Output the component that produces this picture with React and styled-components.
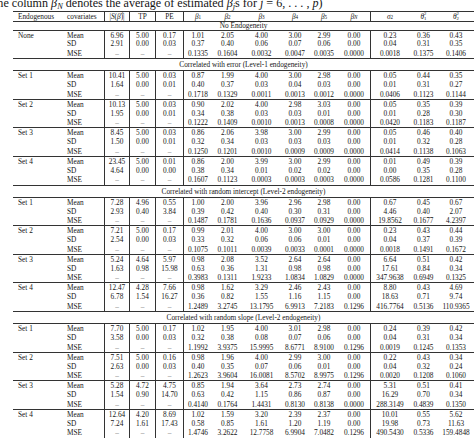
import React from 'react';
import styled, { createGlobalStyle } from 'styled-components';

const GlobalStyle = createGlobalStyle`
  html, body {
    margin: 0;
    padding: 0;
    background: #fff;
  }
  body {
    font-family: "Liberation Serif", "Times New Roman", serif;
    color: #161616;
    overflow: hidden;
  }
`;

// column widths, measured off the scan
const COLS = '49px 42px 25px 26px 28px 29px 31px 37px 30px 28px 32px 39px 29px 36px';
const BARS = [2, 3, 4, 5, 11];
const LINE = '1px solid #333';

const Page = styled.div`
  width: 474px;
  height: 440px;
  overflow: hidden;
  padding-top: 1px;
  box-sizing: border-box;
`;

const Caption = styled.div`
  margin: -4.5px 0 0 -6px;
  height: 12.5px;
  line-height: 12px;
  font-size: 12.1px;
  white-space: nowrap;
`;

const Table = styled.div`
  margin: 2px 0 0 13px;
  width: 461px;
  border-top: ${LINE};
  font-size: 7.3px;
`;

const Row = styled.div`
  display: grid;
  grid-template-columns: ${COLS};
  box-sizing: border-box;
  height: ${p => p.$h}px;
  border-top: ${p => (p.$rule ? LINE : 'none')};
`;

const Cell = styled.div`
  display: flex;
  align-items: center;
  justify-content: ${p => (p.$left ? 'flex-start' : 'center')};
  padding-left: ${p => (p.$left ? '5px' : '0')};
  border-left: ${p => (p.$bar ? LINE : 'none')};
  white-space: nowrap;
`;

const SectionRow = styled.div`
  box-sizing: border-box;
  display: flex;
  align-items: center;
  justify-content: center;
  height: ${p => p.$h}px;
  border-top: ${LINE};
  white-space: nowrap;
`;

const Sym = styled.i`
  font-style: italic;
`;

const Sub = styled.sub`
  font-size: 0.7em;
  vertical-align: -0.25em;
  line-height: 0;
`;

const Sup = styled.sup`
  font-size: 0.7em;
  vertical-align: 0.45em;
  line-height: 0;
`;

const Scripts = styled.span`
  display: inline-flex;
  flex-direction: column;
  font-size: 0.65em;
  line-height: 0.9;
  vertical-align: -0.25em;
`;

const Dash = styled.span`
  color: #777;
`;

const HEAD = [
  'Endogenous',
  'covariates',
  <>|<Sym>S</Sym>(<Sym>β̂</Sym>)|</>,
  'TP',
  'PE',
  <><Sym>β</Sym><Sub>1</Sub></>,
  <><Sym>β</Sym><Sub>2</Sub></>,
  <><Sym>β</Sym><Sub>3</Sub></>,
  <><Sym>β</Sym><Sub>4</Sub></>,
  <><Sym>β</Sym><Sub>5</Sub></>,
  <><Sym>β</Sym><Sub><Sym>N</Sym></Sub></>,
  <><Sym>σ</Sym><Sup>2</Sup></>,
  <><Sym>θ</Sym><Scripts><span>2</span><span>1</span></Scripts></>,
  <><Sym>θ</Sym><Scripts><span>2</span><span>2</span></Scripts></>,
];

const SECTIONS = [
  {
    title: 'No Endogeneity',
    h: 8.5,
    sets: [
      ['None',
        ['6.96', '5.00', '0.17', '1.01', '2.05', '4.00', '3.00', '2.99', '0.00', '0.23', '0.36', '0.43'],
        ['2.91', '0.00', '0.03', '0.37', '0.40', '0.06', '0.07', '0.06', '0.00', '0.04', '0.31', '0.35'],
        ['0.1335', '0.1604', '0.0032', '0.0047', '0.0035', '0.0000', '0.0018', '0.1375', '0.1406']],
    ],
  },
  {
    title: 'Correlated with error (Level-1 endogeneity)',
    h: 12.3,
    sets: [
      ['Set 1',
        ['10.41', '5.00', '0.03', '0.87', '1.99', '4.00', '3.00', '2.98', '0.00', '0.05', '0.44', '0.35'],
        ['1.64', '0.00', '0.01', '0.40', '0.37', '0.03', '0.04', '0.03', '0.00', '0.01', '0.31', '0.27'],
        ['0.1718', '0.1329', '0.0011', '0.0013', '0.0012', '0.0000', '0.0406', '0.1123', '0.1144']],
      ['Set 2',
        ['10.13', '5.00', '0.03', '0.90', '2.02', '4.00', '2.98', '3.03', '0.00', '0.05', '0.35', '0.39'],
        ['1.95', '0.00', '0.01', '0.34', '0.38', '0.03', '0.03', '0.01', '0.00', '0.01', '0.28', '0.30'],
        ['0.1222', '0.1409', '0.0010', '0.0013', '0.0008', '0.0000', '0.0420', '0.1183', '0.1187']],
      ['Set 3',
        ['8.45', '5.00', '0.03', '0.86', '2.06', '3.98', '3.00', '2.99', '0.00', '0.05', '0.46', '0.40'],
        ['1.50', '0.00', '0.01', '0.32', '0.34', '0.03', '0.03', '0.03', '0.00', '0.01', '0.32', '0.28'],
        ['0.1250', '0.1201', '0.0010', '0.0009', '0.0009', '0.0000', '0.0414', '0.1138', '0.1063']],
      ['Set 4',
        ['23.45', '5.00', '0.01', '0.86', '2.00', '3.99', '3.00', '2.99', '0.00', '0.01', '0.49', '0.39'],
        ['4.64', '0.00', '0.00', '0.38', '0.34', '0.01', '0.02', '0.02', '0.00', '0.00', '0.35', '0.28'],
        ['0.1607', '0.1123', '0.0003', '0.0003', '0.0003', '0.0000', '0.0586', '0.1281', '0.1100']],
    ],
  },
  {
    title: 'Correlated with random intercept (Level-2 endogeneity)',
    h: 12.3,
    sets: [
      ['Set 1',
        ['7.28', '4.96', '0.55', '1.00', '2.00', '3.96', '2.96', '2.98', '0.00', '0.67', '0.45', '0.67'],
        ['2.93', '0.40', '3.84', '0.39', '0.42', '0.40', '0.30', '0.31', '0.00', '4.46', '0.40', '2.07'],
        ['0.1487', '0.1781', '0.1636', '0.0937', '0.0929', '0.0000', '19.8562', '0.1677', '4.2397']],
      ['Set 2',
        ['7.21', '5.00', '0.17', '0.99', '2.01', '4.00', '3.00', '3.00', '0.00', '0.23', '0.43', '0.44'],
        ['2.54', '0.00', '0.03', '0.33', '0.32', '0.06', '0.06', '0.01', '0.00', '0.04', '0.37', '0.39'],
        ['0.1075', '0.1011', '0.0039', '0.0033', '0.0001', '0.0000', '0.0018', '0.1491', '0.1672']],
      ['Set 3',
        ['5.24', '4.64', '5.97', '0.98', '2.08', '3.52', '2.64', '2.64', '0.00', '6.64', '0.51', '0.42'],
        ['1.63', '0.98', '15.98', '0.63', '0.36', '1.31', '0.98', '0.98', '0.00', '17.61', '0.84', '0.34'],
        ['0.3983', '0.1311', '1.9233', '1.0834', '1.0829', '0.0000', '347.9638', '0.6949', '0.1325']],
      ['Set 4',
        ['12.47', '4.28', '7.66', '0.98', '1.62', '3.29', '2.46', '2.43', '0.00', '8.80', '0.43', '4.69'],
        ['6.78', '1.54', '16.27', '0.36', '0.82', '1.55', '1.16', '1.15', '0.00', '18.63', '0.71', '9.74'],
        ['1.2489', '3.2745', '13.1795', '6.9913', '7.2183', '0.1296', '416.7764', '0.5136', '110.9365']],
    ],
  },
  {
    title: 'Correlated with random slope (Level-2 endogeneity)',
    h: 12.3,
    sets: [
      ['Set 1',
        ['7.70', '5.00', '0.17', '1.02', '1.95', '4.00', '3.01', '2.98', '0.00', '0.24', '0.39', '0.42'],
        ['3.58', '0.00', '0.03', '0.32', '0.38', '0.08', '0.07', '0.06', '0.00', '0.04', '0.31', '0.34'],
        ['1.1992', '3.9375', '15.9995', '8.6771', '8.9100', '0.1296', '0.0019', '0.1245', '0.1353']],
      ['Set 2',
        ['7.51', '5.00', '0.16', '0.98', '1.96', '4.00', '2.99', '3.00', '0.00', '0.22', '0.43', '0.34'],
        ['2.63', '0.00', '0.03', '0.40', '0.35', '0.07', '0.06', '0.01', '0.00', '0.04', '0.32', '0.24'],
        ['1.2623', '3.9604', '16.0081', '8.5702', '8.9975', '0.1296', '0.0020', '0.1208', '0.1060']],
      ['Set 3',
        ['5.28', '4.72', '4.75', '0.85', '1.94', '3.64', '2.73', '2.74', '0.00', '5.31', '0.51', '0.41'],
        ['1.54', '0.90', '14.70', '0.63', '0.42', '1.15', '0.86', '0.87', '0.00', '16.29', '0.70', '0.34'],
        ['0.4140', '0.1764', '1.4431', '0.8130', '0.8138', '0.0000', '288.3149', '0.4839', '0.1350']],
      ['Set 4',
        ['12.64', '4.20', '8.69', '1.02', '1.59', '3.20', '2.39', '2.37', '0.00', '10.01', '0.55', '5.62'],
        ['7.24', '1.61', '17.43', '0.58', '0.85', '1.61', '1.20', '1.19', '0.00', '19.98', '0.73', '11.63'],
        ['1.4746', '3.2622', '12.7758', '6.9904', '7.0482', '0.1296', '490.5430', '0.5336', '159.4848']],
    ],
  },
];

const ROW_H = 9.52;

function DataRow({ label, stat, values, rule }) {
  const cells = [label, stat, ...values];
  return (
    <Row $h={ROW_H} $rule={rule}>
      {cells.map((c, i) => (
        <Cell key={i} $left={i < 2} $bar={BARS.includes(i)}>{c}</Cell>
      ))}
    </Row>
  );
}

function SetRows({ set }) {
  const [name, mean, sd, mse] = set;
  const dash = <Dash>–</Dash>;
  return (
    <>
      <DataRow label={name} stat="Mean" values={mean} rule />
      <DataRow label="" stat="SD" values={sd} />
      <DataRow label="" stat="MSE" values={[dash, dash, dash, ...mse]} />
    </>
  );
}

export default function App() {
  return (
    <Page>
      <GlobalStyle />
      <Caption>
        the column <Sym>β̂</Sym><Sub><Sym>N</Sym></Sub> denotes the average of estimated{' '}
        <Sym>β̂</Sym><Sub><Sym>j</Sym></Sub>s for <Sym>j</Sym> = 6, . . . , <Sym>p</Sym>)
      </Caption>
      <Table>
        <Row $h={9}>
          {HEAD.map((h, i) => (
            <Cell key={i} $left={i < 2} $bar={BARS.includes(i)}>{h}</Cell>
          ))}
        </Row>
        {SECTIONS.map(sec => (
          <React.Fragment key={sec.title}>
            <SectionRow $h={sec.h}>{sec.title}</SectionRow>
            {sec.sets.map(s => (
              <SetRows key={s[0]} set={s} />
            ))}
          </React.Fragment>
        ))}
      </Table>
    </Page>
  );
}
